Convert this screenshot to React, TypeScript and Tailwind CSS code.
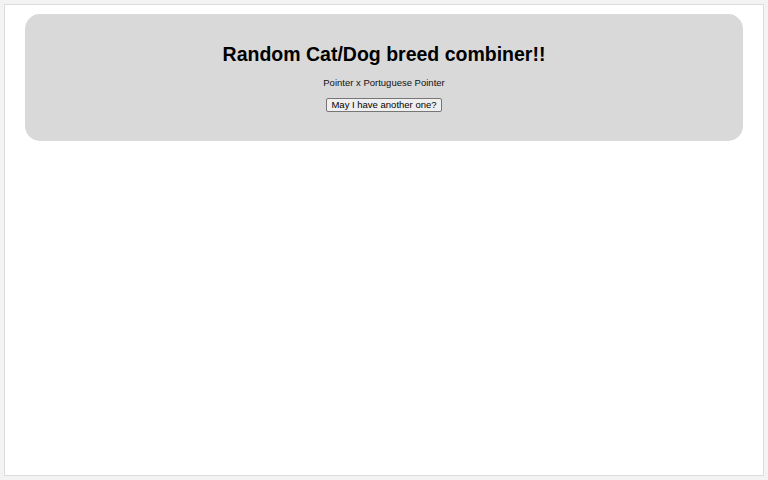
export default function App() {
  return (
    <div className="h-[480px] w-[768px] bg-[#f3f3f3] p-[4px] font-['Liberation_Sans',Arial,sans-serif]">
      <div className="h-[472px] border border-[#dcdcdc] bg-white px-[20px] pt-[9px]">
        <div className="flex flex-col items-center rounded-[15px] bg-[#d9d9d9] pb-[29px] pt-[28px]">
          <h1 className="text-[19.5px] font-bold leading-[24px] text-black">Random Cat/Dog breed combiner!!</h1>
          <p className="mt-[11px] text-[9.5px] leading-[12px] text-[#111]">Pointer x Portuguese Pointer</p>
          <button className="mt-[9px] rounded-[2px] border border-[#767676] bg-[#efefef] px-[4px] text-[9.5px] leading-[12px] text-black">
            May I have another one?
          </button>
        </div>
      </div>
    </div>
  );
}
